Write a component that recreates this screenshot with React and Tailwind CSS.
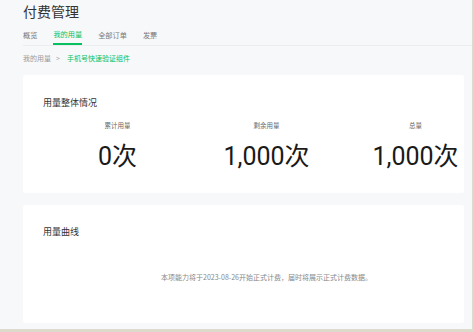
import React from 'react';

const stats = [
  { label: '累计用量', value: '0次' },
  { label: '剩余用量', value: '1,000次' },
  { label: '总量', value: '1,000次' },
];

const tabs = ['概览', '我的用量', '全部订单', '发票'];

const App = () => {
  return (
    <div
      className="w-[474px] h-[332px] bg-[#dcdacb] overflow-hidden"
      style={{ fontFamily: '"Noto Sans CJK SC", "Noto Sans", sans-serif' }}
    >
      <div className="w-[472px] h-[329px] bg-[#f7f8fa] pl-[23px] overflow-hidden">
        {/* Title */}
        <h1 className="h-[22px] leading-[22px] text-[14px] text-[#333] font-normal">付费管理</h1>

        {/* Tabs */}
        <div className="mt-[3px] flex gap-[16px] border-b border-[#ebedf0]">
          {tabs.map((t, i) => (
            <div
              key={t}
              className={
                i === 1
                  ? 'h-[20px] leading-[19px] text-[7.2px] text-[#07c160] border-b-2 border-[#07c160] -mb-px'
                  : 'h-[20px] leading-[20px] text-[7.2px] text-[#777]'
              }
            >
              {t}
            </div>
          ))}
        </div>

        {/* Breadcrumb */}
        <div className="h-[22px] mt-[1px] flex items-center text-[7px]">
          <span className="text-[#999]">我的用量</span>
          <span className="text-[#aaa] ml-[5px] mr-[7px]">&gt;</span>
          <span className="text-[#07c160]">手机号快速验证组件</span>
        </div>

        {/* Usage overview */}
        <div className="mt-[6px] w-[441px] h-[118px] bg-white rounded-[2px] overflow-hidden pl-[20px]">
          <h2 className="pt-[22px] h-[34px] leading-[12px] text-[9px] text-[#333] font-normal">用量整体情况</h2>
          <div className="flex w-[447px]">
            {stats.map((s) => (
              <div key={s.label} className="w-[149px] shrink-0 flex flex-col items-center">
                <div className="mt-[10px] h-[12px] leading-[12px] text-[6.5px] text-[#666]">{s.label}</div>
                <div
                  className="mt-[8px] h-[36px] leading-[36px] text-[25px] text-[#1a1a1a] font-normal"
                  style={{ fontFamily: 'Roboto, "Noto Sans CJK SC", sans-serif' }}
                >
                  {s.value}
                </div>
              </div>
            ))}
          </div>
        </div>

        {/* Usage curve */}
        <div className="mt-[12px] w-[441px] h-[118px] bg-white rounded-[2px] overflow-hidden pl-[20px]">
          <h2 className="pt-[21px] h-[34px] leading-[12px] text-[9px] text-[#333] font-normal">用量曲线</h2>
          <div className="w-[447px] mt-[32px] text-center text-[7px] leading-[12px] text-[#888]">
            本项能力将于2023-08-26开始正式计费，届时将展示正式计费数据。
          </div>
        </div>
      </div>
    </div>
  );
};

export default App;
